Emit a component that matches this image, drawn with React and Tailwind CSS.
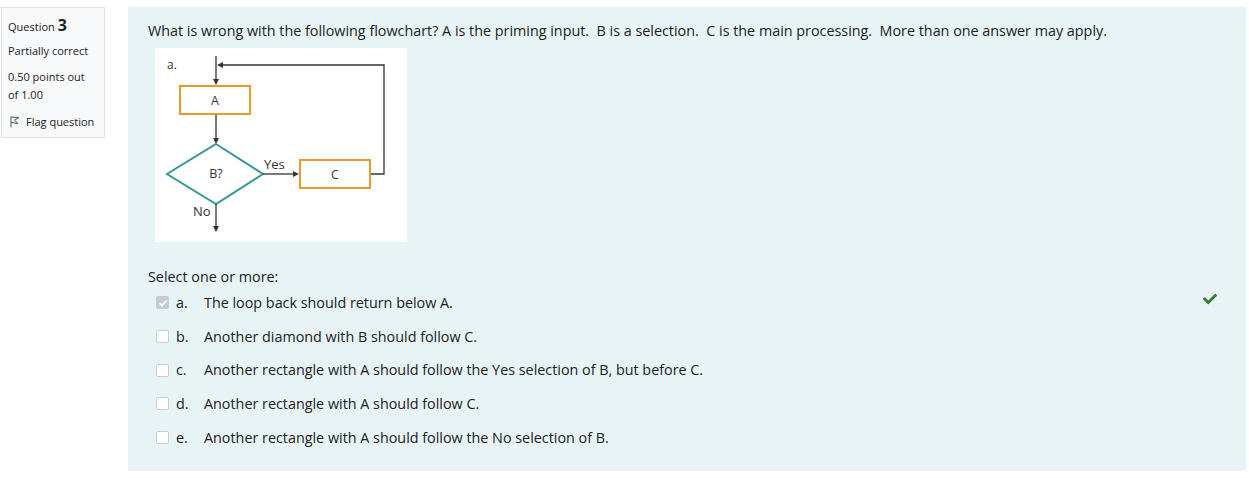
import React from 'react';
import { FaCheck } from 'react-icons/fa';

const font = { fontFamily: '"Open Sans", "Noto Sans", sans-serif' };

function Flowchart() {
  return (
    <div className="ml-[7px] mt-[6px] w-[252px] h-[194px] bg-white">
      <svg width="252" height="194" viewBox="0 0 252 194" fontFamily='"Open Sans", sans-serif'>
        <text x="12" y="21" fontSize="12" fill="#333">a.</text>
        {/* top entry line */}
        <line x1="61" y1="8" x2="61" y2="33" stroke="#333" strokeWidth="1.3" />
        <polygon points="58,31 64,31 61,37" fill="#333" />
        {/* loop back */}
        <polyline points="215,126 229,126 229,17 66,17" fill="none" stroke="#333" strokeWidth="1.3" />
        <polygon points="62,17 68,14 68,20" fill="#333" />
        {/* A */}
        <rect x="25" y="38" width="70" height="28" fill="none" stroke="#e89a2c" strokeWidth="2" />
        <text x="60" y="57" fontSize="12.5" textAnchor="middle" fill="#333">A</text>
        {/* A to B */}
        <line x1="61" y1="67" x2="61" y2="92" stroke="#333" strokeWidth="1.3" />
        <polygon points="58,90 64,90 61,96" fill="#333" />
        {/* Diamond */}
        <polygon points="61,96 108,126 61,156 12,126" fill="none" stroke="#3a9896" strokeWidth="2" />
        <text x="61" y="130" fontSize="12.5" textAnchor="middle" fill="#333">B?</text>
        {/* Yes */}
        <line x1="108" y1="126" x2="140" y2="126" stroke="#333" strokeWidth="1.3" />
        <polygon points="138,123 144,126 138,129" fill="#333" />
        <text x="109" y="121" fontSize="13" fill="#333">Yes</text>
        {/* C */}
        <rect x="145" y="112" width="70" height="28" fill="none" stroke="#e89a2c" strokeWidth="2" />
        <text x="180" y="131" fontSize="12.5" textAnchor="middle" fill="#333">C</text>
        {/* No */}
        <line x1="61" y1="156" x2="61" y2="180" stroke="#333" strokeWidth="1.3" />
        <polygon points="58,178 64,178 61,184" fill="#333" />
        <text x="38" y="168" fontSize="13" fill="#333">No</text>
      </svg>
    </div>
  );
}

function Option({ letter, text, checked }) {
  return (
    <div className="flex items-center h-[33.7px]">
      {checked ? (
        <span className="w-[13px] h-[13px] rounded-[2px] bg-[#c7cbcf] flex items-center justify-center">
          <svg width="10" height="10" viewBox="0 0 10 10">
            <path d="M1.5 5.2 L4 7.6 L8.6 2.4" fill="none" stroke="#fff" strokeWidth="1.8" />
          </svg>
        </span>
      ) : (
        <span className="w-[13px] h-[13px] rounded-[2px] bg-white border border-[#c9cdd1]" />
      )}
      <span className="ml-[7px] w-[28px]">{letter}</span>
      <span>{text}</span>
    </div>
  );
}

export default function App() {
  const options = [
    { letter: 'a.', text: 'The loop back should return below A.', checked: true },
    { letter: 'b.', text: 'Another diamond with B should follow C.' },
    { letter: 'c.', text: 'Another rectangle with A should follow the Yes selection of B, but before C.' },
    { letter: 'd.', text: 'Another rectangle with A should follow C.' },
    { letter: 'e.', text: 'Another rectangle with A should follow the No selection of B.' },
  ];

  return (
    <div className="w-[1249px] h-[478px] bg-white text-[#1d2125] flex items-start pt-[7px]" style={font}>
      <div className="ml-[1px] w-[104px] h-[131px] bg-[#f8f9fa] border border-[#dee2e6] px-[6px] pt-[8px] text-[11px] leading-[18px] whitespace-nowrap">
        <div className="flex items-baseline">
          <span>Question</span>
          <span className="ml-[3px] text-[16px] font-bold">3</span>
        </div>
        <div className="mt-[6px]">Partially correct</div>
        <div className="mt-[8px]">
          0.50 points out
          <br />
          of 1.00
        </div>
        <div className="mt-[9px] flex items-center">
          <svg width="10" height="12" viewBox="0 0 10 12" className="ml-[2px] mr-[6px]">
            <path d="M1 0.5 V11.5 M1 1 L9 1.5 L4.5 4.2 L8 7.5 L1 6.5" fill="none" stroke="#555" strokeWidth="1" />
          </svg>
          <span>Flag question</span>
        </div>
      </div>
      <div className="ml-[23px] w-[1118px] h-[464px] bg-[#e7f3f5] pl-[20px] pt-[13px] relative text-[14.35px]">
        <div className="whitespace-pre leading-[22px]">
          What is wrong with the following flowchart? A is the priming input.  B is a selection.  C is the main processing.  More than one answer may apply.
        </div>
        <Flowchart />
        <div className="mt-[24px] leading-[22px]">Select one or more:</div>
        <div className="ml-[8px] mt-[-2px]">
          {options.map((o) => (
            <Option key={o.letter} {...o} />
          ))}
        </div>
        <FaCheck className="absolute left-[1075px] top-[285px] text-[#357a32]" size={14} />
      </div>
    </div>
  );
}
